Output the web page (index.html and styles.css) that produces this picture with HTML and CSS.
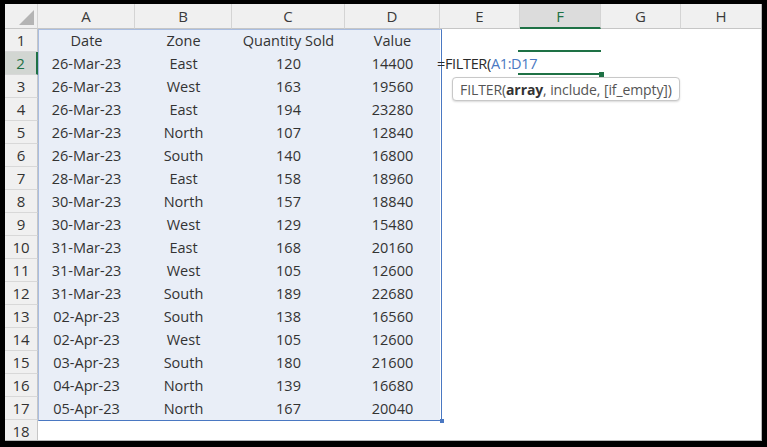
FILE: index.html
```html
<!DOCTYPE html>
<html>
<head>
<meta charset="utf-8">
<link rel="stylesheet" href="styles.css">
</head>
<body>
<div class="sheet">
  <div class="grid">
    <div class="corner"><span class="tri"></span></div>
    <div class="ch">A</div><div class="ch">B</div><div class="ch">C</div><div class="ch">D</div><div class="ch">E</div><div class="ch ch-active">F</div><div class="ch">G</div><div class="ch">H</div>

    <div class="rh">1</div><div class="c s">Date</div><div class="c s">Zone</div><div class="c s">Quantity Sold</div><div class="c s">Value</div><div class="c"></div><div class="c"></div><div class="c"></div><div class="c"></div>
    <div class="rh rh-active">2</div><div class="c s">26-Mar-23</div><div class="c s">East</div><div class="c s">120</div><div class="c s">14400</div><div class="c edit"><span class="fx">=FILTER(</span><span class="ref">A1:D17</span><span class="caret"></span></div><div class="c"></div><div class="c"></div><div class="c"></div>
    <div class="rh">3</div><div class="c s">26-Mar-23</div><div class="c s">West</div><div class="c s">163</div><div class="c s">19560</div><div class="c"></div><div class="c"></div><div class="c"></div><div class="c"></div>
    <div class="rh">4</div><div class="c s">26-Mar-23</div><div class="c s">East</div><div class="c s">194</div><div class="c s">23280</div><div class="c"></div><div class="c"></div><div class="c"></div><div class="c"></div>
    <div class="rh">5</div><div class="c s">26-Mar-23</div><div class="c s">North</div><div class="c s">107</div><div class="c s">12840</div><div class="c"></div><div class="c"></div><div class="c"></div><div class="c"></div>
    <div class="rh">6</div><div class="c s">26-Mar-23</div><div class="c s">South</div><div class="c s">140</div><div class="c s">16800</div><div class="c"></div><div class="c"></div><div class="c"></div><div class="c"></div>
    <div class="rh">7</div><div class="c s">28-Mar-23</div><div class="c s">East</div><div class="c s">158</div><div class="c s">18960</div><div class="c"></div><div class="c"></div><div class="c"></div><div class="c"></div>
    <div class="rh">8</div><div class="c s">30-Mar-23</div><div class="c s">North</div><div class="c s">157</div><div class="c s">18840</div><div class="c"></div><div class="c"></div><div class="c"></div><div class="c"></div>
    <div class="rh">9</div><div class="c s">30-Mar-23</div><div class="c s">West</div><div class="c s">129</div><div class="c s">15480</div><div class="c"></div><div class="c"></div><div class="c"></div><div class="c"></div>
    <div class="rh">10</div><div class="c s">31-Mar-23</div><div class="c s">East</div><div class="c s">168</div><div class="c s">20160</div><div class="c"></div><div class="c"></div><div class="c"></div><div class="c"></div>
    <div class="rh">11</div><div class="c s">31-Mar-23</div><div class="c s">West</div><div class="c s">105</div><div class="c s">12600</div><div class="c"></div><div class="c"></div><div class="c"></div><div class="c"></div>
    <div class="rh">12</div><div class="c s">31-Mar-23</div><div class="c s">South</div><div class="c s">189</div><div class="c s">22680</div><div class="c"></div><div class="c"></div><div class="c"></div><div class="c"></div>
    <div class="rh">13</div><div class="c s">02-Apr-23</div><div class="c s">South</div><div class="c s">138</div><div class="c s">16560</div><div class="c"></div><div class="c"></div><div class="c"></div><div class="c"></div>
    <div class="rh">14</div><div class="c s">02-Apr-23</div><div class="c s">West</div><div class="c s">105</div><div class="c s">12600</div><div class="c"></div><div class="c"></div><div class="c"></div><div class="c"></div>
    <div class="rh">15</div><div class="c s">03-Apr-23</div><div class="c s">South</div><div class="c s">180</div><div class="c s">21600</div><div class="c"></div><div class="c"></div><div class="c"></div><div class="c"></div>
    <div class="rh">16</div><div class="c s">04-Apr-23</div><div class="c s">North</div><div class="c s">139</div><div class="c s">16680</div><div class="c"></div><div class="c"></div><div class="c"></div><div class="c"></div>
    <div class="rh">17</div><div class="c s">05-Apr-23</div><div class="c s">North</div><div class="c s">167</div><div class="c s">20040</div><div class="c"></div><div class="c"></div><div class="c"></div><div class="c"></div>
    <div class="rh">18</div><div class="c"></div><div class="c"></div><div class="c"></div><div class="c"></div><div class="c"></div><div class="c"></div><div class="c"></div><div class="c"></div>
  </div>
  <div class="sel-box"><span class="handle"></span></div>
  <div class="active-cell"><span class="handle green"></span></div>
  <div class="tip">FILTER(<b>array</b>, include, [if_empty])</div>
</div>
</body>
</html>
```
FILE: styles.css
```css
html, body {
  margin: 0;
  padding: 0;
  background: #000;
}
body {
  width: 767px;
  height: 447px;
  overflow: hidden;
}
.sheet {
  position: relative;
  margin: 4px 0 0 5px;
  width: 756px;
  height: 436px;
  background: #fff;
  border-right: 1px solid #b8b8b8;
  border-bottom: 1px solid #b8b8b8;
  overflow: hidden;
  font-family: "Open Sans", "Noto Sans", sans-serif;
  font-size: 14.5px;
  color: #333;
}
.grid {
  display: grid;
  grid-template-columns: 33px 97px 97px 113px 95px 80px 81px 80px 81px;
  grid-template-rows: 25px repeat(18, 23px);
}
.corner {
  background: #f0f0f0;
  border-right: 1px solid #d4d4d4;
  border-bottom: 1px solid #c6c6c6;
  position: relative;
}
.tri {
  position: absolute;
  right: 3px;
  bottom: 3px;
  width: 0;
  height: 0;
  border-left: 15px solid transparent;
  border-bottom: 15px solid #b4b4b4;
}
.ch {
  background: #f0f0f0;
  border-right: 1px solid #d4d4d4;
  border-bottom: 1px solid #c6c6c6;
  display: flex;
  align-items: center;
  justify-content: center;
  color: #3a3a3a;
  font-size: 15px;
}
.ch-active {
  background: #dcdcdc;
  border-bottom: 2px solid #1e7145;
  color: #1e7145;
}
.rh {
  background: #f0f0f0;
  border-right: 1px solid #c6c6c6;
  border-bottom: 1px solid #d8d8d8;
  display: flex;
  align-items: center;
  justify-content: center;
  color: #333;
  font-size: 15px;
}
.rh-active {
  background: #d2d6d2;
  border-right: 2px solid #1e7145;
  color: #1e7145;
}
.c {
  display: flex;
  align-items: center;
  justify-content: center;
  white-space: nowrap;
}
.s {
  background: #e9eef7;
}
.edit {
  justify-content: flex-start;
  overflow: visible;
  margin-left: -3px;
  position: relative;
  z-index: 2;
  font-size: 14.5px;
  letter-spacing: -0.35px;
}
.fx {
  color: #2a2a2a;
}
.ref {
  color: #4a78c2;
}
.caret {
  display: inline-block;
  width: 1px;
  height: 17px;
  background: #111;
  margin-left: 2px;
}
.sel-box {
  position: absolute;
  left: 33px;
  top: 25px;
  width: 402px;
  height: 390px;
  border-right: 1.5px solid #4a78c2;
  border-bottom: 1.5px solid #4a78c2;
  border-left: 1px solid #a9bde0;
  border-top: 1px solid #a9bde0;
  pointer-events: none;
}
.handle {
  position: absolute;
  right: -3px;
  bottom: -3px;
  width: 4px;
  height: 4px;
  background: #4a78c2;
}
.active-cell {
  position: absolute;
  left: 513px;
  top: 46px;
  width: 83px;
  height: 21px;
  border-top: 2px solid #1e7145;
  border-bottom: 2px solid #1e7145;
}
.handle.green {
  background: #1e7145;
  right: -3px;
  bottom: -4px;
  width: 5px;
  height: 5px;
}
.tip {
  position: absolute;
  left: 447px;
  top: 73px;
  height: 22px;
  padding: 0 7px 0 7px;
  display: flex;
  align-items: center;
  background: #fff;
  border: 1px solid #c8c8c8;
  border-radius: 4px;
  box-shadow: 0 1px 2px rgba(0,0,0,0.15);
  font-size: 14px;
  letter-spacing: -0.1px;
  color: #555;
  white-space: nowrap;
  z-index: 3;
}
.tip b {
  color: #333;
  font-weight: 700;
}
```
